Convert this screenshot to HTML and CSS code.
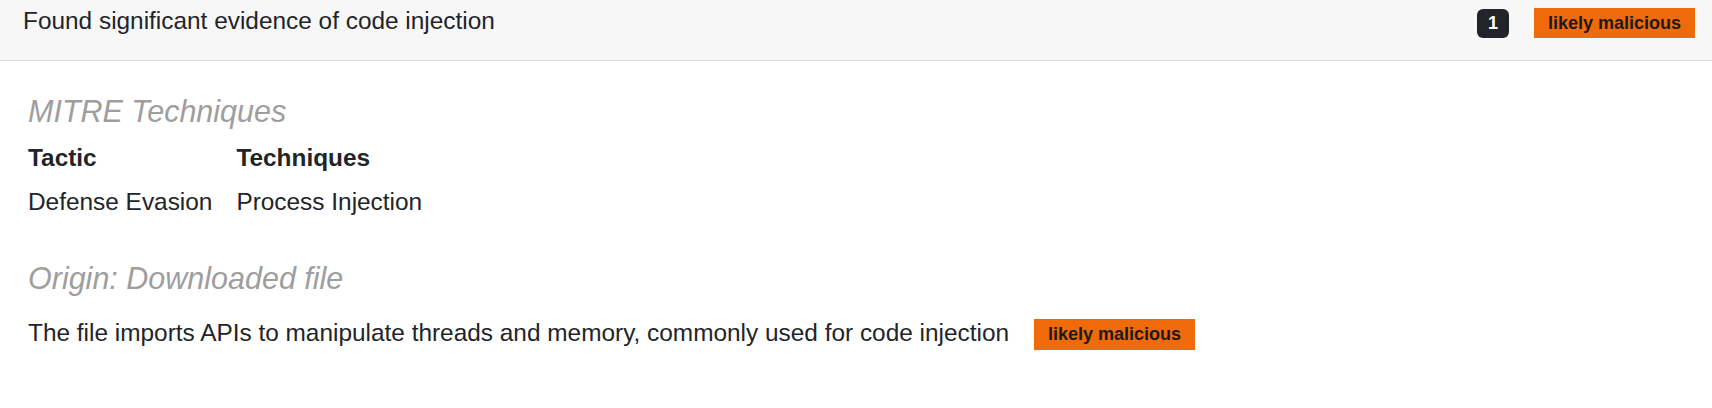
FILE: index.html
```html
<!DOCTYPE html>
<html lang="en">
<head>
<meta charset="utf-8">
<title>Code injection finding</title>
<link rel="stylesheet" href="styles.css">
</head>
<body>
<div class="panel">
  <div class="panel-header">
    <span class="header-title">Found significant evidence of code injection</span>
    <div class="header-badges">
      <span class="count">1</span>
      <span class="tag">likely malicious</span>
    </div>
  </div>
  <div class="panel-body">
    <h3 class="section-title">MITRE Techniques</h3>
    <div class="mitre">
      <div class="th">Tactic</div>
      <div class="th">Techniques</div>
      <div class="td">Defense Evasion</div>
      <div class="td">Process Injection</div>
    </div>
    <h3 class="section-title origin">Origin: Downloaded file</h3>
    <p class="finding">The file imports APIs to manipulate threads and memory, commonly used for code injection<span class="tag inline">likely malicious</span></p>
  </div>
</div>
</body>
</html>
```
FILE: styles.css
```css
html, body {
  margin: 0;
  padding: 0;
  background: #ffffff;
}
body {
  font-family: "Liberation Sans", Arial, sans-serif;
  color: #212529;
  font-size: 24.4px;
}
.panel-header {
  display: flex;
  justify-content: space-between;
  align-items: flex-start;
  height: 54px;
  padding: 6px 17px 0 23px;
  background: #f7f7f7;
  border-bottom: 1px solid #dcdcdc;
}
.header-title {
  line-height: 30px;
}
.header-badges {
  display: flex;
  align-items: center;
  gap: 25px;
  margin-top: 2px;
}
.count {
  display: inline-flex;
  align-items: center;
  justify-content: center;
  width: 32px;
  height: 29px;
  border-radius: 6px;
  background: #212529;
  color: #ffffff;
  font-weight: bold;
  font-size: 18px;
}
.tag {
  display: inline-block;
  box-sizing: border-box;
  width: 161px;
  height: 30px;
  line-height: 30px;
  text-align: center;
  background: #f06a0a;
  color: #1a1a1a;
  font-weight: bold;
  font-size: 18px;
}
.panel-body {
  padding: 0 28px;
}
.section-title {
  margin: 32px 0 0;
  font-size: 30.5px;
  line-height: 36px;
  font-weight: normal;
  font-style: italic;
  color: #9e9e9e;
}
.mitre {
  display: grid;
  grid-template-columns: max-content max-content;
  column-gap: 24px;
  margin-top: 7px;
}
.th, .td {
  line-height: 44px;
}
.th {
  font-weight: bold;
}
.origin {
  margin-top: 36px;
}
.finding {
  margin: 19px 0 0;
  line-height: 36px;
}
.tag.inline {
  height: 31px;
  line-height: 31px;
  margin-left: 25px;
  vertical-align: 1px;
}
```
